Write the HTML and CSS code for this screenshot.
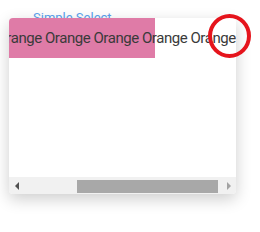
FILE: index.html
```html
<html>

<head>
    <title>Simple Select</title>
    <link rel="stylesheet" href="styles.css">
    <script src="script.js"></script>
</head>

<body>
    <div class="select-field">
        <label class="select-label">Simple Select</label>
        <div class="select-menu">
            <div class="menu-list" id="menu-list">
                <div class="select-option selected">Orange Orange Orange Orange Orange Orange</div>
            </div>
            <div class="h-scrollbar">
                <div class="scroll-btn"><span class="arrow-left"></span></div>
                <div class="scroll-track">
                    <div class="scroll-thumb"></div>
                </div>
                <div class="scroll-btn"><span class="arrow-right"></span></div>
            </div>
        </div>
        <div class="highlight-ring"></div>
    </div>
</body>

</html>
```

FILE: styles.css
```css
body {
    font-family: Roboto, "Liberation Sans", sans-serif;
    margin: 0;
    padding: 0;
    background: #fff;
}

.select-field {
    position: relative;
    width: 260px;
    height: 232px;
}

.select-label {
    display: block;
    padding: 10px 0 0 33px;
    font-size: 13px;
    line-height: 16px;
    color: #5aa2ee;
}

.select-menu {
    position: absolute;
    top: 18px;
    left: 9px;
    width: 227px;
    height: 176px;
    background: white;
    border-radius: 4px;
    box-shadow: 0 5px 16px rgba(0, 0, 0, 0.2);
    overflow: hidden;
    display: flex;
    flex-direction: column;
}

.menu-list {
    flex: 1;
    overflow: hidden;
}

.select-option {
    height: 40px;
    line-height: 40px;
    padding: 0 20px;
    white-space: nowrap;
    font-size: 15px;
    letter-spacing: -0.45px;
    color: #3a3a3a;
}

.select-option.selected {
    background-color: #df7ba7;
}

.h-scrollbar {
    height: 17px;
    display: flex;
    background: #f1f1f1;
}

.scroll-btn {
    width: 15px;
    display: flex;
    align-items: center;
    justify-content: center;
}

.arrow-left {
    width: 0;
    height: 0;
    border-top: 4px solid transparent;
    border-bottom: 4px solid transparent;
    border-right: 4px solid #505050;
}

.arrow-right {
    width: 0;
    height: 0;
    border-top: 4px solid transparent;
    border-bottom: 4px solid transparent;
    border-left: 4px solid #a3a3a3;
}

.scroll-track {
    flex: 1;
    display: flex;
    justify-content: flex-end;
    padding: 3px 3px 1px 0;
}

.scroll-thumb {
    width: 141px;
    background: #a8a8a8;
}

.highlight-ring {
    position: absolute;
    top: 14px;
    left: 208px;
    width: 43px;
    height: 44px;
    box-sizing: border-box;
    border: 4px solid #e5141c;
    border-radius: 50%;
}
```

FILE: script.js
```js
document.addEventListener("DOMContentLoaded", () => {
    const list = document.getElementById("menu-list");
    list.scrollLeft = 82; // scrolled to the end of the long option
});
```
